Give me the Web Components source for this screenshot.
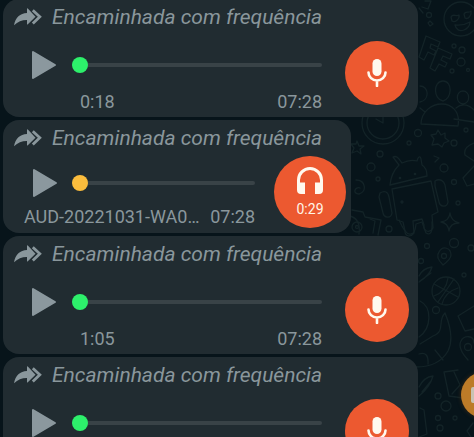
<!DOCTYPE html>
<html lang="pt-BR">
<head>
<meta charset="utf-8">
<meta name="viewport" content="width=device-width, initial-scale=1">
<title>Conversa</title>
<style>
  html, body { height: 100%; }
  body { margin: 0; background: #07141a; font-family: Roboto, "Noto Sans", sans-serif; overflow: hidden; }
</style>
</head>
<body>
<chat-screen>
  <voice-message elapsed="0:18" total="07:28"></voice-message>
  <voice-message kind="audio" elapsed="0:29" total="07:28" name="AUD-20221031-WA0…"></voice-message>
  <voice-message elapsed="1:05" total="07:28"></voice-message>
  <voice-message elapsed="" total=""></voice-message>
</chat-screen>

<script>
class ChatWallpaper extends HTMLElement {
  constructor() {
    super();
    this.attachShadow({ mode: 'open' }).innerHTML = `
      <style>
        :host { display: block; }
        svg { display: block; fill: none; stroke: #132327; stroke-width: 1.3; stroke-linecap: round; stroke-linejoin: round; }
      </style>
      <svg width="474" height="437" viewBox="0 0 474 437" aria-hidden="true">
        <g>
          <circle cx="461" cy="19" r="17"/>
          <path d="M451 17c2-4 5 0 8-2 1 4-4 8-7 6zM464 14c2-4 5 0 7-3 1 4-3 9-6 7zM455 25q8 1 15-3c0 8-13 13-15 3z"/>
          <path d="M425 1l6 0-3 8-6-2M419 8l4 5M430 26l-2-3 2-2 3 3zM426 36l14 6-2 5-7-3-1 4 6 3-2 4-6-3-4 8-5-3zM438 48l14 6-2 5-7-3-2 4 6 3-2 4-6-3-4 7-5-3z"/>
          <circle cx="452" cy="71" r="2"/><circle cx="461" cy="62" r="4"/><circle cx="462" cy="50" r="3"/><circle cx="454" cy="46" r="2"/><circle cx="468" cy="70" r="1.5"/><circle cx="429" cy="15" r="2.5"/>
          <path d="M443 81c10 0 9 18 0 20-10-2-10-20 0-20zM421 124c1-26 42-28 37 2zM420 86c9 0 10 14 0 16M463 91c7 0 8 12 0 13-8-1-7-13 0-13zM456 108c7-6 14-2 18 2M454 119l20 3M420 108l5 4"/>
          <circle cx="383" cy="123" r="21"/><circle cx="383" cy="123" r="16"/><path d="M383 112v11l-7-4"/>
          <path d="M438 130l3 5 4-2 0 5 4 3-5 2-2 4-4-3-6 1 2-6-3-4 5-1zM357 141l2 5 5 0-4 3 1 5-4-3-5 2 2-5-3-4 5 0z"/>
          <circle cx="418" cy="133" r="3.5"/><circle cx="409" cy="143" r="2"/><circle cx="380" cy="154" r="3"/><circle cx="371" cy="167" r="4"/><circle cx="378" cy="179" r="2"/><circle cx="454" cy="143" r="3"/><circle cx="466" cy="130" r="2"/><circle cx="444" cy="168" r="4"/><circle cx="454" cy="182" r="2.5"/><path d="M434 156l5 2-4 4"/>
          <path d="M390 185c1-11 5-16 9-20l-6-8c4-2 6 2 9 6q8-4 15-2c1-4 3-6 4-2l1 6c5 3 5 8 5 11zM392 189l39-8 7 31-6 3 1 13c-4 6-10 3-9-3l-2-6-9 2 1 12c-4 5-9 3-9-2l-2-9-6-2z"/>
          <path d="M380 193c5-3 8-1 9 4l3 16c-1 6-8 5-9 0l-4-16zM435 181c5-3 9 0 10 4l3 17c-1 6-8 5-9 0l-4-16z"/><circle cx="400" cy="178" r=".7"/><circle cx="415" cy="174" r=".7"/>
          <path d="M356 180c10 0 11 12 3 14-7 0-4-8 1-6M474 143q-11 4-9 12l9 6M474 166l-11 12 4 8 7-2"/>
          <path d="M352 210l11 2 2 5 16 3-3 15M350 216q11 3 9 18"/><circle cx="357" cy="227" r="5"/><circle cx="357" cy="227" r="1.5"/>
          <path d="M370 219l5 2-2 12M399 220q7 16 12 14 4 0 5-10l6-2 4 11q7 4 6-11M450 213q1 8 9 10-9 0-10 8-1-8-8-9 8-1 9-9z"/>
          <circle cx="389" cy="229" r="3"/><circle cx="402" cy="202" r="1"/><circle cx="458" cy="203" r="2"/>
          <circle cx="454" cy="243" r="4.5"/><circle cx="427" cy="246" r="2.5"/><circle cx="421" cy="261" r="2.5"/><circle cx="471" cy="248" r="3"/><circle cx="464" cy="275" r="2"/>
          <path d="M443 265q-8-8-4-13c4-7 12-4 12 3q0 4-8 10z"/><circle cx="444" cy="256" r="2.5"/>
          <path d="M419 276q4-8 13-9-2 8-13 15M420 281l11-8"/>
          <circle cx="446" cy="291" r="14"/><path d="M434 284l24 13M438 302l16-23M434 296q12-4 14-18M442 304q3-12 16-16"/>
          <circle cx="436" cy="310" r="3.5"/><path d="M420 301c12 6 12 27-1 36M445 313c-8 8 1 18-12 23l-13 8M445 313q10 24 3 38-9 16-32 16M458 316l16-10M458 316l7 15 9-2M419 354q10-3 9 10M435 350l8 10"/>
          <path d="M468 360q-11-12-7-19c3-6 13-6 13 2"/><circle cx="468" cy="347" r="3.5"/>
          <path d="M458 370l-14 2 5 24 14 2M454 372l6 13-8 9M419 387q5-10 14-11-3 11-14 20M422 392l9-11"/>
          <circle cx="438" cy="396" r="3"/><circle cx="446" cy="406" r="5"/><circle cx="438" cy="418" r="2.5"/><circle cx="455" cy="418" r="2"/><circle cx="440" cy="428" r="3"/><path d="M420 408l4 2 3 24-8 3M473 423l-6 8 4 6"/>
        </g>
      </svg>`;
  }
}

class ForwardLabel extends HTMLElement {
  constructor() {
    super();
    this.attachShadow({ mode: 'open' }).innerHTML = `
      <style>
        :host { display: flex; align-items: center; gap: 10px; height: 36px; color: #8a979c; font-size: 21px; line-height: 26px; font-style: italic; white-space: nowrap; }
        svg { flex: none; fill: #8a979c; }
      </style>
      <svg width="28" height="18" viewBox="0 0 28 18" aria-hidden="true">
        <path d="M0 17.200C1.500 9.500 6 5.400 13 5V.800q0-.8.800-.3L21.500 8.700l-7.700 7.600q-.8.600-.8-.4v-4C8 11.800 4 13.500 0 17.200z"/>
        <path d="M18.800 2.200L25.800 8.700 18.800 15.400" fill="none" stroke="#8a979c" stroke-width="2.800"/>
      </svg>
      <span><slot></slot></span>`;
  }
}

class MessageAvatar extends HTMLElement {
  connectedCallback() {
    const audio = this.getAttribute('kind') === 'audio';
    this.attachShadow({ mode: 'open' }).innerHTML = `
      <style>
        :host { display: flex; flex-direction: column; align-items: center; justify-content: center; flex: none; width: 64px; height: 64px; border-radius: 50%; background: #ec5930; color: #fff5e8; font-size: 14px; line-height: 18px; }
        :host([kind="audio"]) { width: 72px; height: 72px; gap: 6px; }
        svg { display: block; fill: #fff9ee; }
      </style>
      ${audio
        ? `<svg width="26" height="27" viewBox="0 0 26 27" aria-hidden="true"><path d="M0 23V13a13 13 0 0 1 26 0v10q0 4-4 4h-4V15.500h5V13a10 10 0 0 0-20 0v2.500h5V27H4q-4 0-4-4z"/></svg><slot></slot>`
        : `<svg width="20" height="28" viewBox="0 0 20 28" aria-hidden="true"><rect x="5.500" y="0" width="9" height="17" rx="4.500"/><path d="M1.500 13.500a8.500 8 0 0 0 17 0M10 21.500v5.500" fill="none" stroke="#fff9ee" stroke-width="2.600" stroke-linecap="round"/></svg>`}`;
  }
}

class VoiceMessage extends HTMLElement {
  connectedCallback() {
    const a = n => this.getAttribute(n) || '';
    const audio = a('kind') === 'audio';
    this.attachShadow({ mode: 'open' }).innerHTML = `
      <style>
        :host { display: block; flex: none; box-sizing: border-box; margin-right: 56px; padding: 0 9px 4px 11px; border-radius: 16px; background: #212c31; color: #8a979c; --dot: #2df06b; }
        :host([kind="audio"]) { margin-right: 123px; padding-right: 5px; padding-bottom: 5px; --dot: #fbbd3d; }
        .body { display: flex; align-items: flex-end; gap: 23px; }
        .player { flex: 1; min-width: 0; padding-top: 14px; }
        .controls { display: flex; align-items: center; gap: 15px; height: 32px; padding-left: 17px; }
        button { flex: none; display: flex; border: 0; padding: 0; background: none; }
        button svg { fill: #8b989e; stroke: #8b989e; stroke-width: 2; stroke-linejoin: round; }
        input { flex: 1; min-width: 0; height: 16px; margin: 0; appearance: none; background: none; }
        input::-webkit-slider-runnable-track { height: 4px; border-radius: 2px; background: #394347; }
        input::-webkit-slider-thumb { appearance: none; width: 16px; height: 16px; margin-top: -6px; border-radius: 50%; background: var(--dot); }
        .times { display: flex; justify-content: space-between; margin-top: 10px; padding-left: 66px; height: 22px; font-size: 18px; line-height: 22px; white-space: nowrap; }
        message-avatar { margin-bottom: 8px; }
        :host([kind="audio"]) .body { gap: 19px; }
        :host([kind="audio"]) .player { padding-top: 11px; }
        :host([kind="audio"]) .controls { padding-left: 18px; gap: 14px; }
        :host([kind="audio"]) .times { margin-top: 7px; padding-left: 10px; }
        :host([kind="audio"]) message-avatar { margin-bottom: 0; }
      </style>
      <forward-label>Encaminhada com frequência</forward-label>
      <div class="body">
        <div class="player">
          <div class="controls">
            <button type="button" aria-label="Reproduzir"><svg width="26" height="30" viewBox="0 0 26 30" aria-hidden="true"><path d="M2 2v26L24 15z"/></svg></button>
            <input type="range" min="0" max="448" value="0" aria-label="Posição do áudio">
          </div>
          <div class="times"><span>${audio ? a('name') : a('elapsed')}</span><span>${a('total')}</span></div>
        </div>
        <message-avatar kind="${audio ? 'audio' : 'voice'}">${audio ? a('elapsed') : ''}</message-avatar>
      </div>`;
  }
}

class FloatingRecorder extends HTMLElement {
  constructor() {
    super();
    this.attachShadow({ mode: 'open' }).innerHTML = `
      <style>
        :host { display: block; }
        button { display: flex; align-items: center; justify-content: center; width: 46px; height: 46px; padding: 0; border: 0; border-radius: 50%; background: #bd7b28; box-shadow: 0 0 4px #3a2a18; }
      </style>
      <button type="button" aria-label="Gravador"><svg width="26" height="16" viewBox="0 0 26 16" aria-hidden="true"><path d="M2 0h16q2 0 2 2v3l6-4v14l-6-4v3q0 2-2 2H2q-2 0-2-2V2q0-2 2-2z" fill="#c9c3b4"/></svg></button>`;
  }
}

class ChatScreen extends HTMLElement {
  constructor() {
    super();
    this.attachShadow({ mode: 'open' }).innerHTML = `
      <style>
        :host { display: block; position: relative; height: 100vh; overflow: hidden; }
        chat-wallpaper { position: absolute; top: 0; right: 0; }
        main { position: relative; display: flex; flex-direction: column; gap: 3px; margin-top: -1px; padding-left: 3px; }
        floating-recorder { position: absolute; right: -33px; bottom: 19px; }
      </style>
      <chat-wallpaper></chat-wallpaper>
      <main><slot></slot></main>
      <floating-recorder></floating-recorder>`;
  }
}

customElements.define('chat-wallpaper', ChatWallpaper);
customElements.define('forward-label', ForwardLabel);
customElements.define('message-avatar', MessageAvatar);
customElements.define('voice-message', VoiceMessage);
customElements.define('floating-recorder', FloatingRecorder);
customElements.define('chat-screen', ChatScreen);
</script>
</body>
</html>
